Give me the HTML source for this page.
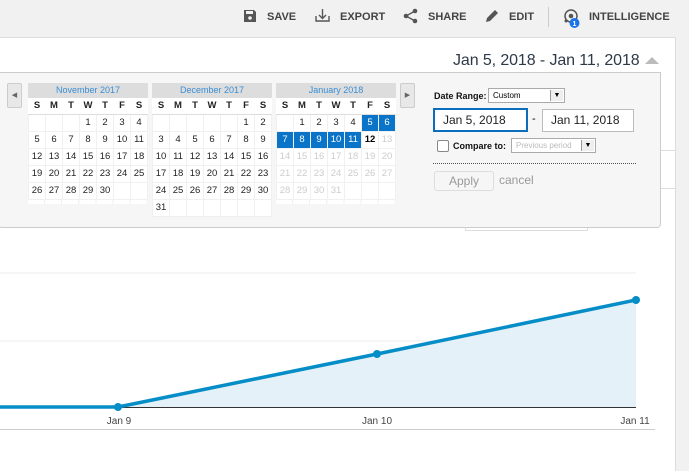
<!DOCTYPE html>
<html><head><meta charset="utf-8"><style>
*{box-sizing:border-box;margin:0;padding:0}
body{width:689px;height:471px;overflow:hidden;background:#f1f1f1;font-family:"Liberation Sans",Arial,sans-serif;position:relative}
.a{position:absolute}
.tb{font-size:11px;font-weight:bold;color:#444;top:11px}
.main{left:0;top:37px;width:676px;height:434px;background:#fff;border-top:1px solid #ddd;border-right:1px solid #ddd}
.pop{left:-2px;top:72px;width:663px;height:156px;background:#f6f6f6;border:1px solid #ccc;border-radius:0 0 4px 4px}
.mo{position:absolute;top:83px;width:120px;background:#fff}
.mh{height:15px;background:#ddd;color:#3a8ed6;font-size:9px;text-align:center;line-height:15px}
table{border-collapse:collapse;width:120px}
td{width:17.1px;height:17px;text-align:center;font-size:9.5px;color:#222;border:1px solid #f0f0f0;padding:0}
tr.w td{font-weight:bold;height:16px;border:0;border-bottom:1px solid #ddd}
td.s{background:#0a74c8;color:#fff}
td.g{color:#ccc}
td.b{font-weight:bold;color:#000}
.pr{height:4px;background:repeating-linear-gradient(90deg,#fff 0 16px,#f0f0f0 16px 17.1px)}
.nav{top:83px;width:15px;height:25px;background:#e8e8e8;border:1px solid #ccc;border-radius:2px;font-size:7px;color:#666;text-align:center;line-height:23px}
.lbl{font-size:9px;font-weight:bold;color:#111}
.inp{background:#fff;border:1px solid #bbb;font-size:12px;color:#222;padding-left:8px;line-height:20px}
.sel{background:#fff;border:1px solid #aaa;font-size:8px;padding-left:4px;line-height:13px}
.sel:after{content:"▼";position:absolute;right:1px;top:1px;width:12px;height:11px;background:#eee;border-left:1px solid #999;font-size:7px;text-align:center;line-height:11px;color:#000}
</style></head><body>
<div class="a tb" style="left:243px;top:9px"><svg width="14" height="14" viewBox="0 0 14 14"><path d="M1 1h10l2 2v10H1z" fill="#555"/><rect x="3" y="2" width="7" height="3" fill="#f1f1f1"/><circle cx="7" cy="9" r="1.8" fill="#f1f1f1"/></svg></div>
<div class="a tb" style="left:267px">SAVE</div>
<div class="a" style="left:315px;top:8px"><svg width="15" height="15" viewBox="0 0 15 15" fill="none" stroke="#555" stroke-width="1.4"><path d="M1 8v5h13V8M7.5 1v9M4 7l3.5 3.5L11 7"/></svg></div>
<div class="a tb" style="left:340px">EXPORT</div>
<div class="a" style="left:403px;top:8px"><svg width="15" height="16" viewBox="0 0 15 16" fill="#555"><circle cx="12" cy="3" r="2.3"/><circle cx="3" cy="8" r="2.3"/><circle cx="12" cy="13" r="2.3"/><path d="M12 3L3 8l9 5" stroke="#555" stroke-width="1.3" fill="none"/></svg></div>
<div class="a tb" style="left:428px">SHARE</div>
<div class="a" style="left:485px;top:9px"><svg width="14" height="14" viewBox="0 0 14 14" fill="#555"><path d="M1 13l1-4 8-8 3 3-8 8z"/></svg></div>
<div class="a tb" style="left:509px">EDIT</div>
<div class="a" style="left:548px;top:7px;width:1px;height:20px;background:#ccc"></div>
<div class="a" style="left:563px;top:7px"><svg width="20" height="22" viewBox="0 0 20 22"><circle cx="8" cy="9" r="6" fill="none" stroke="#555" stroke-width="1.5"/><circle cx="8" cy="9" r="2.3" fill="#555"/><circle cx="3" cy="14" r="1.5" fill="#555"/><circle cx="11.5" cy="16" r="5" fill="#1a73e8"/><text x="11.5" y="19" font-size="7" fill="#fff" text-anchor="middle" font-family="Liberation Sans" font-weight="bold">1</text></svg></div>
<div class="a tb" style="left:589px">INTELLIGENCE</div>
<div class="a main"></div>
<div class="a" style="left:453px;top:52px;font-size:16px;color:#2d3a48;letter-spacing:-0.1px">Jan 5, 2018 - Jan 11, 2018</div>
<div class="a" style="left:645px;top:57px;width:0;height:0;border-left:7px solid transparent;border-right:7px solid transparent;border-bottom:7px solid #bbb"></div>
<div class="a" style="left:661px;top:150px;width:15px;height:1px;background:#ddd"></div>
<div class="a" style="left:661px;top:188px;width:15px;height:1px;background:#ddd"></div>
<div class="a" style="left:465px;top:228px;width:123px;height:3px;border:1px solid #ddd;border-top:0"></div>
<div class="a pop"></div>
<div class="a nav" style="left:7px">◀</div>
<div class="a nav" style="left:400px">▶</div>
<div id="cal"></div>
<div class="a lbl" style="left:434px;top:91px">Date Range:</div>
<div class="a sel" style="left:488px;top:88px;width:77px;height:15px">Custom</div>
<div class="a inp" style="left:433px;top:108px;width:95px;height:24px;border:2px solid #0a6ebd">Jan 5, 2018</div>
<div class="a" style="left:532px;top:113px;font-size:11px">-</div>
<div class="a inp" style="left:542px;top:109px;width:92px;height:23px">Jan 11, 2018</div>
<div class="a" style="left:437px;top:140px;width:12px;height:12px;border:1px solid #888;border-radius:2px;background:#fff"></div>
<div class="a lbl" style="left:453px;top:141px">Compare to:</div>
<div class="a sel" style="left:511px;top:138px;width:85px;height:15px;color:#bbb">Previous period</div>
<div class="a" style="left:433px;top:163px;width:203px;border-top:1px dotted #555"></div>
<div class="a" style="left:434px;top:171px;width:60px;height:20px;border:1px solid #ddd;border-radius:3px;background:#f6f6f6;font-size:12px;color:#999;text-align:center;line-height:18px">Apply</div>
<div class="a" style="left:499px;top:173px;font-size:12px;color:#999">cancel</div>
<svg class="a" style="left:0;top:0" width="689" height="471">
<line x1="0" y1="273" x2="636" y2="273" stroke="#eee"/>
<line x1="0" y1="341" x2="636" y2="341" stroke="#eee"/>
<path d="M118 407L377 354L636 300V407Z" fill="#e4f1f8"/>
<line x1="0" y1="407.5" x2="636" y2="407.5" stroke="#333"/>
<polyline points="0,407 118,407 377,354 636,300" fill="none" stroke="#058dc7" stroke-width="3.5"/>
<circle cx="118" cy="407" r="4" fill="#058dc7"/><circle cx="377" cy="354" r="4" fill="#058dc7"/><circle cx="636" cy="300" r="4" fill="#058dc7"/>
<g font-family="Liberation Sans" font-size="10" fill="#444" text-anchor="middle"><text x="119" y="424">Jan 9</text><text x="377" y="424">Jan 10</text><text x="635" y="424">Jan 11</text></g>
<line x1="0" y1="429.5" x2="655" y2="429.5" stroke="#ccc"/>
</svg>
<script>
var ms=[["November 2017",28,3,30],["December 2017",152,5,31],["January 2018",276,1,31]],h='';
ms.forEach(function(m,i){h+='<div class="mo" style="left:'+m[1]+'px"><div class="mh">'+m[0]+'</div><table><tr class="w"><td>S</td><td>M</td><td>T</td><td>W</td><td>T</td><td>F</td><td>S</td></tr>';
var d=1-m[2],rows=i==1?6:5;for(var r=0;r<rows;r++){h+='<tr>';for(var c=0;c<7;c++){var t=(d>=1&&d<=m[3])?d:'',cl='';if(i==2&&t){if(t>=5&&t<=11)cl='s';else if(t==12)cl='b';else if(t>12)cl='g';}h+='<td class="'+cl+'">'+t+'</td>';d++}h+='</tr>'}
h+='</table>';if(i!=1)h+='<div class="pr"></div>';
h+='</div>'});document.getElementById('cal').innerHTML=h;
</script>
</body></html>
